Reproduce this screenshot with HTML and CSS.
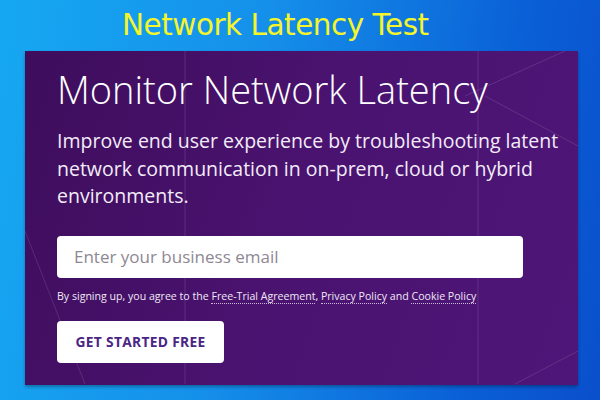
FILE: index.html
```html
<!DOCTYPE html>
<html lang="en">
<head>
  <meta charset="UTF-8">
  <title>Network Latency Test</title>
  <link rel="stylesheet" href="styles.css">
</head>
<body>
  <div class="page">
    <h2 class="caption">Network Latency Test</h2>
    <div class="panel">
      <!-- faint decorative lines behind the content -->
      <svg class="deco" width="553" height="333" viewBox="0 0 553 333">
        <line x1="160" y1="0" x2="160" y2="333" />
        <line x1="453" y1="0" x2="453" y2="333" />
        <line x1="540" y1="0" x2="440" y2="45" />
        <line x1="460" y1="45" x2="553" y2="95" />
        <line x1="553" y1="300" x2="490" y2="333" />
        <line x1="0" y1="180" x2="60" y2="333" />
      </svg>
      <div class="content">
        <h1>Monitor Network Latency</h1>
        <p class="lead">Improve end user experience by troubleshooting latent network communication in on-prem, cloud or hybrid environments.</p>
        <input class="email" type="text" placeholder="Enter your business email">
        <p class="terms">By signing up, you agree to the <a href="#">Free-Trial Agreement</a>, <a href="#">Privacy Policy</a> and <a href="#">Cookie Policy</a></p>
        <button>GET STARTED FREE</button>
      </div>
    </div>
  </div>
</body>
</html>
```

FILE: styles.css
```css
body {
  margin: 0;
  padding: 0;
  width: 600px;
  height: 400px;
  overflow: hidden;
  background: linear-gradient(100deg, #16a8f2 0%, #1590ea 40%, #0a5fd6 80%, #0a4fcc 100%);
}

.page {
  display: flex;
  flex-direction: column;
  padding-left: 25px;
}

.caption {
  margin: 7px 0 0 97px;
  height: 44px;
  font-family: "DejaVu Sans", sans-serif;
  font-weight: normal;
  font-size: 29.5px;
  line-height: 36px;
  color: #f4f52a;
  letter-spacing: -0.5px;
}

.panel {
  position: relative;
  width: 553px;
  height: 334px;
  background: linear-gradient(110deg, #3e0d5c 0%, #4a1370 50%, #4e1678 100%);
  box-shadow: 0 2px 3px rgba(0, 0, 0, 0.3);
}

.deco {
  position: absolute;
  left: 0;
  top: 0;
}

.deco line {
  stroke: rgba(255, 255, 255, 0.12);
  stroke-width: 1;
}

.content {
  position: relative;
  padding: 14px 0 0 32px;
  display: flex;
  flex-direction: column;
  align-items: flex-start;
  font-family: "Open Sans", sans-serif;
  color: #fff;
}

h1 {
  margin: 0;
  font-weight: 300;
  font-size: 38px;
  line-height: 48px;
}

.lead {
  margin: 14px 0 0;
  width: 530px;
  font-size: 19.5px;
  line-height: 27.5px;
  color: #f3ecf8;
}

.email {
  margin-top: 26px;
  width: 466px;
  height: 42px;
  box-sizing: border-box;
  border: none;
  border-radius: 4px;
  padding: 0 17px;
  font-family: "Open Sans", sans-serif;
  font-size: 17px;
  outline: none;
}

.email::placeholder {
  color: #8e8893;
}

.terms {
  margin: 11px 0 0;
  font-size: 10.6px;
  color: #f0e8f5;
}

.terms a {
  color: #f0e8f5;
  text-decoration: none;
  border-bottom: 1px dotted #cbb8d8;
}

button {
  margin-top: 18px;
  width: 167px;
  height: 42px;
  border: none;
  border-radius: 4px;
  background: #fff;
  color: #4b2585;
  font-family: "Open Sans", sans-serif;
  font-weight: bold;
  font-size: 13.8px;
  letter-spacing: 0.3px;
}
```
